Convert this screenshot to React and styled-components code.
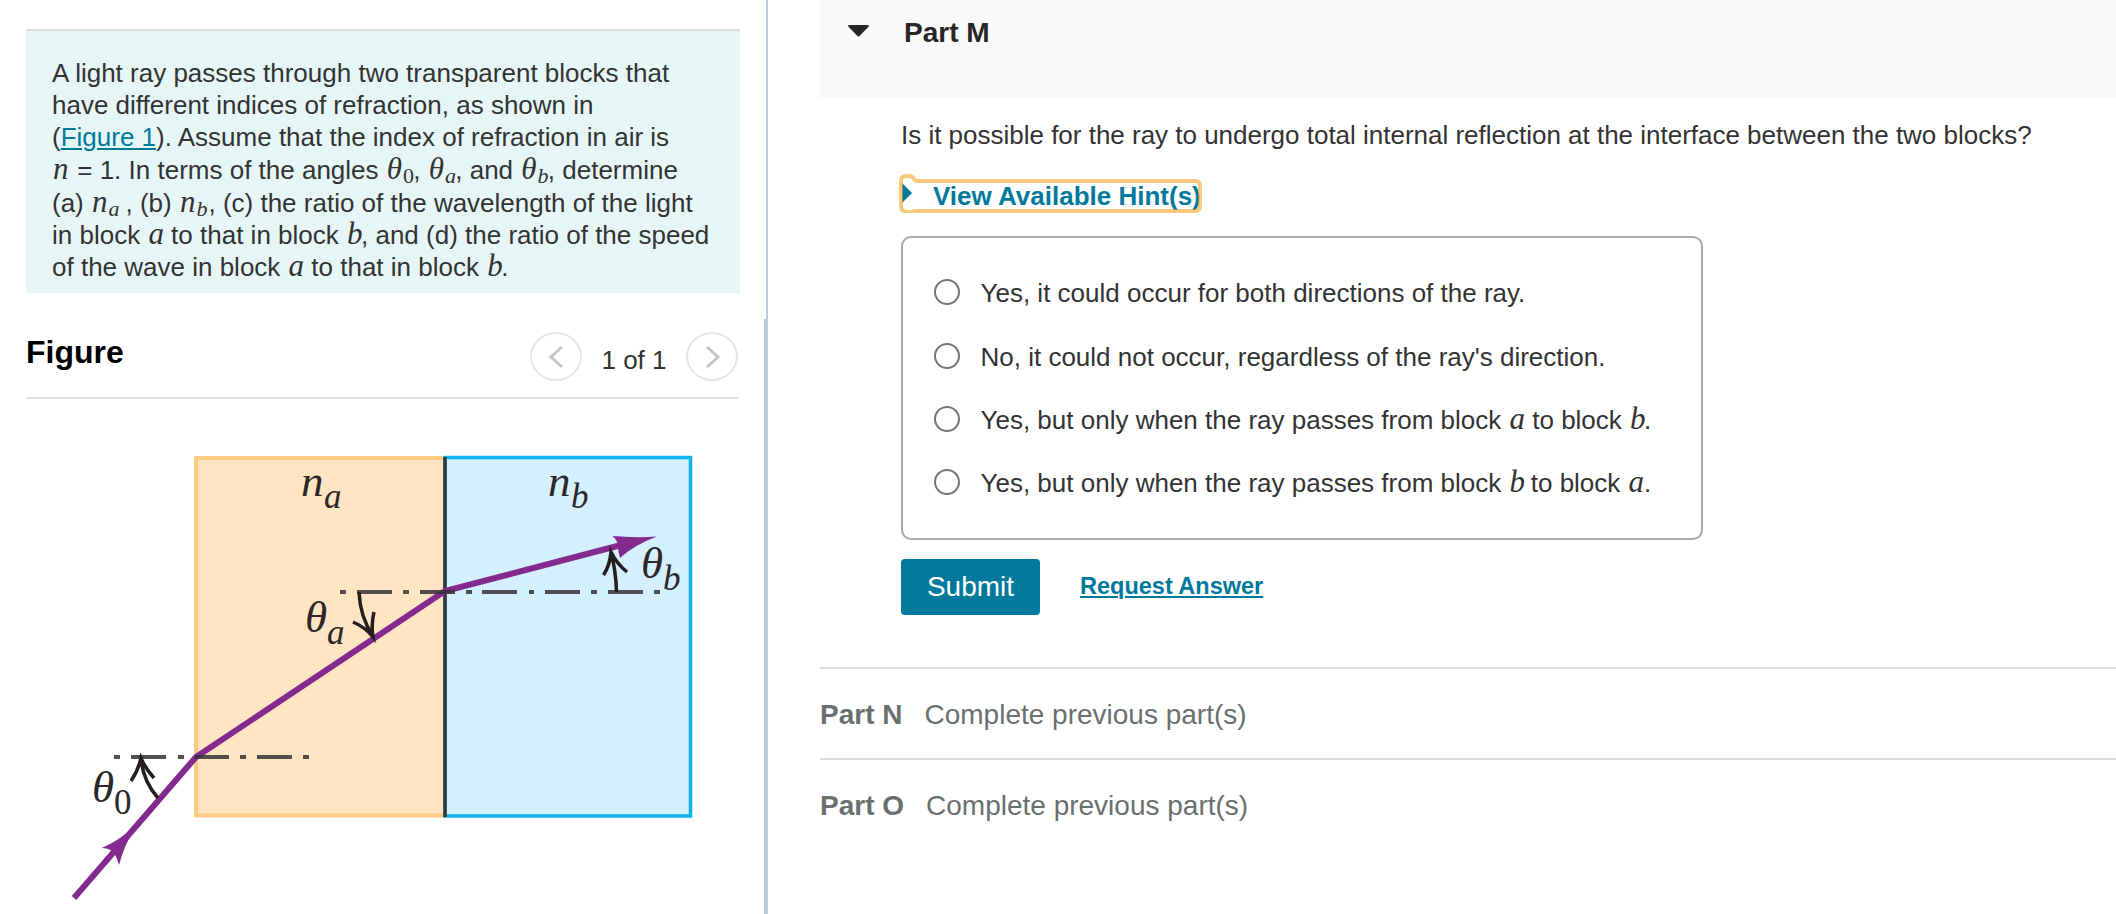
import React, {useState} from 'react';
import styled, {createGlobalStyle} from 'styled-components';

const GlobalStyle = createGlobalStyle`
  * {
    box-sizing: border-box;
  }
  body {
    margin: 0;
    background: #fff;
    color: #333;
    font-family: "Liberation Sans", Arial, sans-serif;
    font-size: 26px;
    overflow: hidden;
  }
`;

const Page = styled.div`
  display: flex;
  height: 914px;
  overflow: hidden;
`;

/* left side */
const Sidebar = styled.aside`
  width: 768px;
  flex: none;
  display: flex;
  flex-direction: column;
  border-right: 2px solid #b9cbde;
`;
const IntroPane = styled.section`
  height: 319px;
  flex: none;
  padding: 29px 26px 0;
`;
const Intro = styled.div`
  height: 264px;
  padding: 26px 0 0 26px;
  background: #e6f6f7;
  border-top: 2px solid #ddd;
`;
const Line = styled.div`
  height: ${props => props.$tall ? 33 : 32}px;
  line-height: 32px;
  white-space: pre;
`;
const FigureLink = styled.a`
  color: #007a9c;
  text-decoration: underline;
  text-decoration-thickness: 2px;
  text-underline-offset: 2px;
`;
const MathBox = styled.span`
  display: inline-block;
  width: ${props => props.$w}px;
  line-height: 20px;
  padding-left: 1px;
  font-family: "Liberation Serif", serif;
  font-style: italic;
  font-size: 31px;
  white-space: nowrap;
`;
const Sub = styled.span`
  position: relative;
  top: 4px;
  margin-left: 1px;
  font-size: 22px;
  line-height: 1px;
  font-style: ${props => props.$upright ? 'normal' : 'italic'};
`;
const FigurePane = styled.section`
  flex: 1;
  padding: 0 26px;
  border-right: 2px solid #b9cbde;
`;
const FigureHeader = styled.header`
  display: flex;
  align-items: flex-start;
  height: 80px;
  padding-top: 13px;
  border-bottom: 2px solid #ddd;
`;
const FigureTitle = styled.h2`
  flex: 1;
  margin: 2px 0 0;
  color: #000;
  font-size: 32px;
  line-height: 36px;
`;
const PagerButton = styled.button`
  display: flex;
  align-items: center;
  justify-content: center;
  width: 52px;
  height: 49px;
  padding: 0;
  background: #fff;
  border: 2px solid #e6e6e6;
  border-radius: 50%;
`;
const PagerText = styled.span`
  width: 104px;
  padding-top: 13px;
  line-height: 30px;
  text-align: center;
`;
const Drawing = styled.svg`
  display: block;
  font-family: "Liberation Serif", serif;
  font-style: italic;
`;

/* right side */
const Main = styled.main`
  flex: 1;
  padding-left: 52px;
`;
const PartHeader = styled.header`
  display: flex;
  height: 98px;
  padding: 16px 0 0 28px;
  background: #f9f9f9;
`;
const PartTitle = styled.h1`
  margin: 1px 0 0 35px;
  color: #262626;
  font-size: 28px;
  line-height: 32px;
`;
const Caret = styled.svg`
  margin-top: 9px;
`;
const PartBody = styled.div`
  height: 569px;
  padding: 22px 0 0 81px;
`;
const Question = styled.p`
  margin: 0 0 28px;
  line-height: 30px;
  letter-spacing: -0.01px;
`;
const HintButton = styled.button`
  position: relative;
  display: flex;
  width: 300px;
  height: 34px;
  padding: 0 0 0 1px;
  border: 0;
  background: none;
  color: #007a9c;
  font: bold 26px/36px "Liberation Sans", Arial, sans-serif;
  white-space: nowrap;
`;
const HintArrow = styled.svg`
  flex: none;
  margin: 5px 21px 0 0;
`;
const FocusRing = styled.svg`
  position: absolute;
  left: -2px;
  top: -4px;
`;
const Answers = styled.div`
  width: 802px;
  height: 304px;
  margin: 24px 0 19px;
  padding: 22px 31px;
  border: 2px solid #a9a9a9;
  border-radius: 10px;
`;
const Answer = styled.label`
  display: flex;
  align-items: center;
  height: ${props => props.$tall ? 64 : 63}px;
  white-space: pre;
`;
const Radio = styled.input`
  appearance: none;
  width: 26px;
  height: 26px;
  margin: 0 20.5px 0 0;
  border: 2px solid #767676;
  border-radius: 50%;
  background: #fff;
  &:checked {
    box-shadow: inset 0 0 0 4px #fff;
    background: #007a9c;
  }
`;
const AnswerText = styled.span`
  height: 32px;
  line-height: 32px;
  margin-top: 2px;
`;
const Actions = styled.div`
  display: flex;
  align-items: center;
`;
const Submit = styled.button`
  width: 139px;
  height: 56px;
  margin-right: 40px;
  padding: 0;
  border: 0;
  border-radius: 4px;
  background: #007a9c;
  color: #fff;
  font: 28px "Liberation Sans", Arial, sans-serif;
`;
const RequestLink = styled.a`
  margin-bottom: 2px;
  color: #007a9c;
  font-size: 23.5px;
  font-weight: bold;
  text-decoration: underline;
  text-decoration-thickness: 2px;
  text-underline-offset: 2px;
`;
const LockedPart = styled.div`
  display: flex;
  gap: 22px;
  height: ${props => props.$h}px;
  padding-top: 29px;
  border-top: 2px solid #ddd;
  color: #6a7070;
  font-size: 28px;
  line-height: 34px;
`;

const Sym = ({v, sub, w}) => (
  <MathBox $w={w}>{v}{sub && <Sub $upright={sub === '0'}>{sub}</Sub>}</MathBox>
);

const A = () => <Sym v="a" w={16.5} />;
const B = () => <Sym v="b" w={15} />;

const Chevron = ({d}) => (
  <svg width="16" height="24" viewBox="0 0 16 24" fill="none" stroke="#c4c4c4" strokeWidth="3">
    <path d={d} />
  </svg>
);

// dash-dot normals: [start, end] of every stroke
const upperNormal = [[340, 346], [357, 392], [403, 409], [420, 455], [466, 472], [482, 517], [529, 534], [545, 580], [591, 597], [608, 643], [654, 660]];
const lowerNormal = [[114, 120], [131, 166], [178, 184], [195, 229], [240, 246], [257, 292], [303, 309]];

const Normal = ({parts, y}) => (
  <path
    d={parts.map(([from, to]) => `M${from} ${y}H${to}`).join('')}
    stroke="#333"
    strokeOpacity="0.85"
    strokeWidth="4"
  />
);

const Label = ({x, y, v, sub, subX}) => (
  <>
    <text x={x} y={y} fontSize="45">{v}</text>
    <text x={subX} y={y + 12} fontSize="35" fontStyle={sub === '0' ? 'normal' : 'italic'}>{sub}</text>
  </>
);

const RayFigure = () => (
  <Drawing width="712" height="515" viewBox="26 399 712 515">
    <rect x="196" y="458" width="249" height="357.5" fill="#ffe4c4" stroke="#ffcb80" strokeWidth="4" />
    <rect x="445" y="457.5" width="245.5" height="358.5" fill="#d4effd" stroke="#0eb4ef" strokeWidth="3.5" />
    <path d="M445 457V817" stroke="#3a3537" strokeWidth="3.5" />
    <g fill="none">
      <path d="M74 898L196 757L445 591L625 544" stroke="#822a8e" strokeWidth="6" />
      <Normal parts={upperNormal} y={592} />
      <Normal parts={lowerNormal} y={757} />
      <g stroke="#231f20" strokeWidth="3.5">
        <path d="M158 798Q143 781 141 759M131 781Q138 771 141 758Q145 768 154 778" />
        <path d="M359 592Q360 617 373 636M353 622Q365 627 373 637Q371 625 374 612" />
        <path d="M616.500 592Q616 571 611 553M603.500 575Q610 565 611 552Q617 564 627 572" />
      </g>
    </g>
    <g fill="#822a8e">
      <path d="M657 536.500Q635 538 612.500 536Q618 541 618 546Q618 551 620 558Q634 545 657 536.500Z" />
      <path d="M136 825Q119 841 101.500 848Q108 848 112 851Q116 854 119 865Q124 846 136 825Z" />
    </g>
    <g fill="#2c282a">
      <Label v="n" x={301} y={496} sub="a" subX={324} />
      <Label v="n" x={548} y={496} sub="b" subX={571} />
      <Label v="θ" x={305} y={631.5} sub="a" subX={327} />
      <Label v="θ" x={641} y={577.5} sub="b" subX={663} />
      <Label v="θ" x={92} y={801.5} sub="0" subX={114} />
    </g>
  </Drawing>
);

const answers = [
  'Yes, it could occur for both directions of the ray.',
  'No, it could not occur, regardless of the ray\'s direction.',
  <>Yes, but only when the ray passes from block <A /> to block <B />.</>,
  <>Yes, but only when the ray passes from block <B /> to block <A />.</>,
];

const App = () => {
  const [picked, setPicked] = useState(null);

  return (
    <Page>
      <GlobalStyle />
      <Sidebar>
        <IntroPane>
          <Intro>
            <Line>A light ray passes through two transparent blocks that</Line>
            <Line>have different indices of refraction, as shown in</Line>
            <Line $tall>(<FigureLink>Figure 1</FigureLink>). Assume that the index of refraction in air is</Line>
            <Line $tall><Sym v="n" w={18} /> = 1. In terms of the angles <Sym v="θ" sub="0" w={27.5} />, <Sym v="θ" sub="a" w={27.5} />, and <Sym v="θ" sub="b" w={27.5} />, determine</Line>
            <Line>(a) <Sym v="n" sub="a" w={34.5} />, (b) <Sym v="n" sub="b" w={29.5} />, (c) the ratio of the wavelength of the light</Line>
            <Line>in block <A /> to that in block <B />, and (d) the ratio of the speed</Line>
            <Line>of the wave in block <A /> to that in block <B />.</Line>
          </Intro>
        </IntroPane>
        <FigurePane>
          <FigureHeader>
            <FigureTitle>Figure</FigureTitle>
            <PagerButton><Chevron d="M14 2L3 12L14 22" /></PagerButton>
            <PagerText>1 of 1</PagerText>
            <PagerButton><Chevron d="M3 2L14 12L3 22" /></PagerButton>
          </FigureHeader>
          <RayFigure />
        </FigurePane>
      </Sidebar>
      <Main>
        <PartHeader>
          <Caret width="21" height="12" viewBox="0 0 21 12" fill="#262626">
            <path d="M1 0H20Q21.500 0.500 20.500 1.800L11.500 11Q10.500 12 9.500 11L0.500 1.800Q-0.500 0.500 1 0Z" />
          </Caret>
          <PartTitle>Part M</PartTitle>
        </PartHeader>
        <PartBody>
          <Question>Is it possible for the ray to undergo total internal reflection at the interface between the two blocks?</Question>
          <HintButton>
            <HintArrow width="10" height="20" viewBox="0 0 10 20" fill="#007a9c">
              <path d="M0 0L10 10L0 20Z" />
            </HintArrow>
            View Available Hint(s)
            <FocusRing width="304" height="39" viewBox="899 174 304 39" fill="none">
              <path
                d="M901 181Q901 176 906 176H908Q913 176 914 179Q915 181 918 181H1195Q1200 181 1200 186V206Q1200 211 1195 211H917Q914 211 912 212H906Q901 211 901 206Z"
                stroke="#f5a623"
                strokeOpacity="0.6"
                strokeWidth="4"
              />
            </FocusRing>
          </HintButton>
          <Answers>
            {answers.map((text, i) => (
              <Answer key={i} $tall={i === 0}>
                <Radio type="radio" name="answer" checked={picked === i} onChange={() => setPicked(i)} />
                <AnswerText>{text}</AnswerText>
              </Answer>
            ))}
          </Answers>
          <Actions>
            <Submit>Submit</Submit>
            <RequestLink>Request Answer</RequestLink>
          </Actions>
        </PartBody>
        <LockedPart $h={91}><b>Part N</b> Complete previous part(s)</LockedPart>
        <LockedPart $h={91}><b>Part O</b> Complete previous part(s)</LockedPart>
      </Main>
    </Page>
  );
};

export default App;
